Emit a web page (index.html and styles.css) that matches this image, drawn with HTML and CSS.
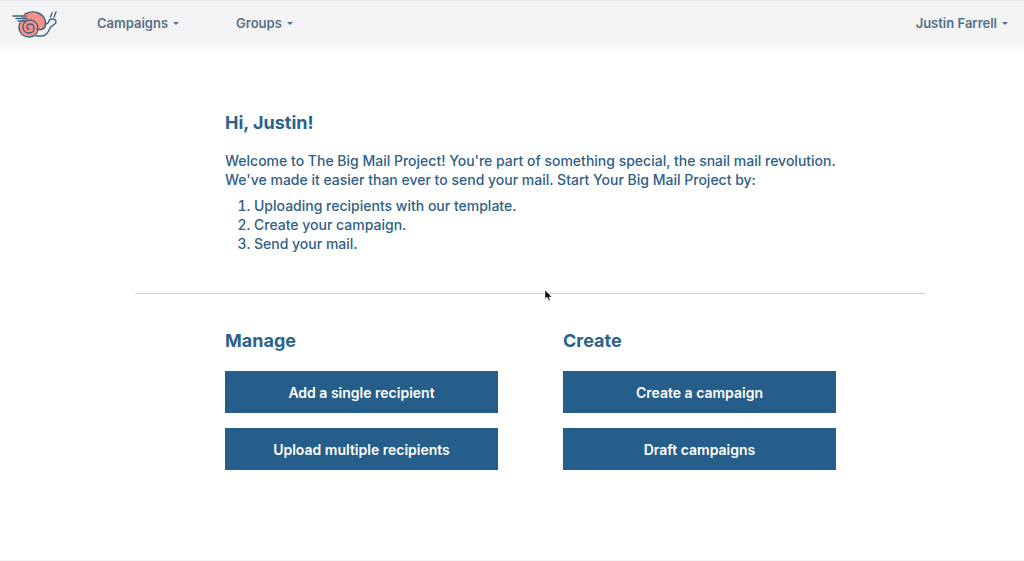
FILE: index.html
```html
<!DOCTYPE html>
<html lang="en">
<head>
    <meta charset="UTF-8">
    <meta name="viewport" content="width=device-width, initial-scale=1.0">
    <title>The Big Mail Project</title>
    <link rel="stylesheet" href="styles.css">
</head>
<body>
    <header class="navbar">
        <a class="logo" href="#" aria-label="The Big Mail Project">
            <svg width="46" height="31" viewBox="0 0 46 31" fill="none" stroke="#3d6684" stroke-width="1.4" stroke-linecap="round" stroke-linejoin="round">
                <!-- shell -->
                <path d="M9 10C11 5 17 4 22 4c8 0 13 7 12 15-2 3-6 4-9 3 0 5-4 7-8 7-6 0-10-4-10-9 0-4 1-7 4-9z" fill="#fa9085" stroke="none"/>
                <path d="M13 6c4-2 9-3 13-1 6 2 9 8 7 14-2 3-5 3-8 2"/>
                <path d="M8 15c-3 6 1 14 9 14 6 0 9-4 9-9 0-4-3-8-8-8-4 0-7 3-7 7s3 6 6 6 5-2 5-5-2-4-4-4-3 1-3 3 1 2 2 2"/>
                <!-- body and head -->
                <path d="M24 28h6c4 0 6-3 8-8 1-3 5-2 6-6 0-2-2-3-4-3-3 0-3 2-4 4-1 1-2 1-3 1"/>
                <path d="M38.500 9l1.500-4M42 9l2-5"/>
                <!-- speed lines -->
                <path d="M1 8h13M4 10.500h11M6 13h7" stroke-width="1.600"/>
            </svg>
        </a>
        <nav class="menu">
            <button class="menu-item">Campaigns <span class="caret"></span></button>
            <button class="menu-item">Groups <span class="caret"></span></button>
            <button class="menu-item user">Justin Farrell <span class="caret"></span></button>
        </nav>
    </header>
    <main class="container">
        <section class="intro">
            <h1>Hi, Justin!</h1>
            <p>Welcome to The Big Mail Project! You're part of something special, the snail mail revolution.<br>
            We've made it easier than ever to send your mail. Start Your Big Mail Project by:</p>
            <ol>
                <li>Uploading recipients with our template.</li>
                <li>Create your campaign.</li>
                <li>Send your mail.</li>
            </ol>
        </section>
        <hr>
        <div class="actions">
            <section class="column">
                <h2>Manage</h2>
                <button class="btn">Add a single recipient</button>
                <button class="btn">Upload multiple recipients</button>
            </section>
            <section class="column">
                <h2>Create</h2>
                <button class="btn">Create a campaign</button>
                <button class="btn">Draft campaigns</button>
            </section>
        </div>
    </main>
    <svg class="pointer" width="8" height="13" viewBox="0 0 8 13">
        <path d="M1 1v9l2-2 2 4 1-1-1-3h3z" fill="#111" stroke="#fff" stroke-width=".5"/>
    </svg>
</body>
</html>
```

FILE: styles.css
```css
* {
    box-sizing: border-box;
}

body {
    margin: 0;
    min-height: 100vh;
    background-color: #fff;
    border-bottom: 1px solid #f5f5f5;
    color: #2f6087;
    font-family: Inter, "Open Sans", sans-serif;
    font-size: 13px;
    font-weight: 500;
    line-height: 19px;
}

.navbar {
    display: flex;
    align-items: center;
    height: 52px;
    padding: 0 16px 7px 12px;
    background: linear-gradient(#f2f3f4 0, #f4f4f5 40px, #fff 52px);
    border-top: 1px solid #e6e7e8;
}

.logo {
    display: flex;
}

.menu {
    display: flex;
    flex: 1;
    gap: 57px;
    margin-left: 39px;
}

.menu-item {
    display: flex;
    align-items: center;
    gap: 5px;
    padding: 0;
    border: none;
    background: none;
    color: #566f88;
    font: inherit;
    font-weight: 600;
    cursor: pointer;
}

.user {
    margin-left: auto;
}

.caret {
    border-top: 3px solid #566f88;
    border-left: 3px solid transparent;
    border-right: 3px solid transparent;
}

.container {
    padding: 60px 99px 0 135px;
}

.intro {
    padding: 0 0 40px 90px;
}

h1,
h2 {
    margin: 0 0 19px;
    color: #2b628c;
    font-size: 18px;
    font-weight: 700;
    line-height: 22px;
}

h1 {
    margin-bottom: 17px;
}

p {
    margin: 0 0 7px;
    font-size: 14px;
}

ol {
    margin: 0;
    padding-left: 29px;
    font-size: 14px;
}

hr {
    margin: 0 0 36px;
    border: none;
    border-top: 1px solid #ccc;
}

.actions {
    display: grid;
    grid-template-columns: 1fr 1fr;
    gap: 65px;
    padding: 0 89px 0 90px;
}

.column {
    display: flex;
    flex-direction: column;
}

.btn {
    height: 42px;
    margin-bottom: 15px;
    border: none;
    background-color: #255e8b;
    color: #fff;
    font-family: inherit;
    font-size: 14px;
    font-weight: 600;
    cursor: pointer;
}

.pointer {
    position: absolute;
    top: 289px;
    left: 544px;
}
```
